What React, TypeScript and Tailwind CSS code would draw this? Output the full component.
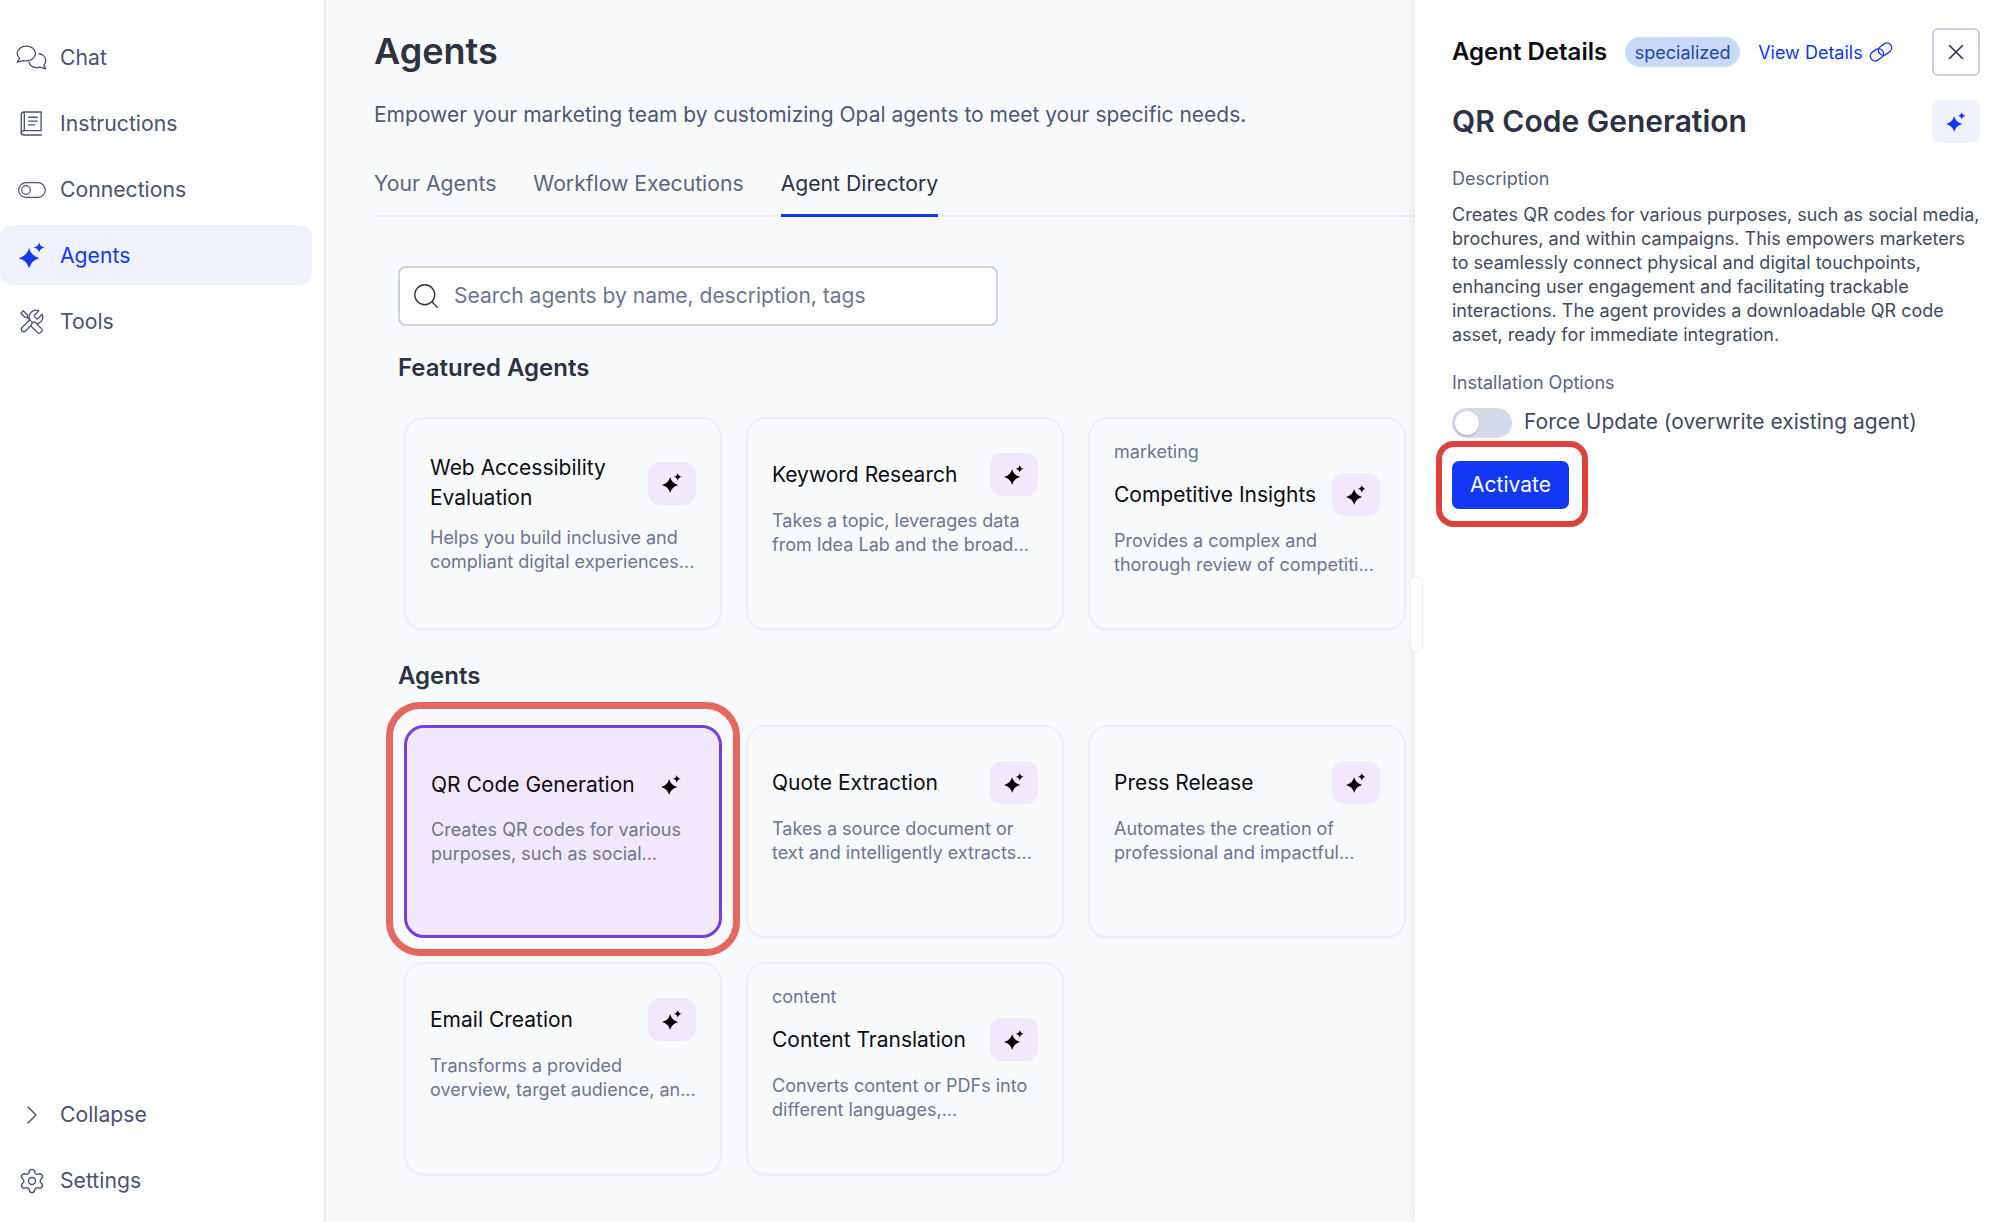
import { ReactNode } from "react";
import { ChevronRight, Search, Settings, X } from "lucide-react";

// Four point star with a smaller one to its upper right
const Sparkle = ({ className }: { className: string }) => (
	<svg viewBox="0 0 24 24" className={className} fill="currentColor">
		<path d="M10 5.500C11 9.900 13.800 12.900 18.800 14.200C13.800 15.500 11 18.500 10 23C9 18.500 6.200 15.500 1.200 14.200C6.200 12.900 9 9.900 10 5.500Z" />
		<path d="M18.300 1C18.800 3.400 20 4.700 22.800 5.300C20 5.900 18.800 7.200 18.300 9.600C17.800 7.200 16.600 5.900 13.800 5.300C16.600 4.700 17.800 3.400 18.300 1Z" />
	</svg>
);

const ChatIcon = () => (
	<svg viewBox="0 0 30 24" className="w-[31px] h-[25px]" fill="none" stroke="currentColor" strokeWidth="1.300" strokeLinejoin="round" strokeLinecap="round">
		<path d="M10 1C5 1 1.200 4 1.200 8C1.200 10 2 11.600 3.400 12.800L1.300 16.500L7.200 15C8 15.200 9 15.300 10 15.300C15 15.300 18.800 12.100 18.800 8C18.800 4 15 1 10 1Z" />
		<path d="M12.500 16.600C13.700 20 16.500 21.800 20 21.800C21 21.800 22 21.600 23 21.300L28.800 23L26.900 19.600C28 18.400 28.800 16.800 28.800 15C28.800 11.700 26.200 9 22.500 8.400" />
	</svg>
);

const BookIcon = () => (
	<svg viewBox="0 0 24 26" className="w-[23px] h-[25px]" fill="none" stroke="currentColor" strokeWidth="1.400" strokeLinejoin="round" strokeLinecap="round">
		<path d="M4.500 1H22V20.500H4C2.500 20.500 1.300 21.500 1.300 22.800C1.300 24.100 2.500 25 4 25H22.500" />
		<path d="M1.300 22.800V4C1.300 2.300 2.700 1 4.500 1V20.500" />
		<path d="M9 6.500H18M9 10.500H18M9 14.500H15" />
	</svg>
);

const ToggleIcon = () => (
	<svg viewBox="0 0 28 16" className="w-[28px] h-[16px]" fill="none" stroke="currentColor" strokeWidth="1.200">
		<rect x="0.700" y="0.700" width="26.600" height="14.600" rx="7.300" />
		<circle cx="8" cy="8" r="4.300" />
	</svg>
);

// Wrench running under a screwdriver
const ToolsIcon = () => (
	<svg viewBox="0 0 24 24" className="w-[27px] h-[27px]" fill="none" stroke="currentColor" strokeWidth="1.150" strokeLinejoin="round" strokeLinecap="round">
		<path d="M14.700 6.300a1 1 0 0 0 0 1.400l1.600 1.600a1 1 0 0 0 1.400 0l3.770-3.770a6 6 0 0 1-7.940 7.940l-6.910 6.910a2.120 2.120 0 0 1-3-3l6.910-6.910a6 6 0 0 1 7.940-7.940l-3.760 3.760z" />
		<path d="M2.500 4.700L4.700 2.500L8.200 6L8.500 8.500L6 8.200Z" />
		<path d="M8.300 8.300L13.200 13.200" />
		<rect x="11" y="15" width="11" height="5" rx="1.500" transform="rotate(45 16.500 17.500)" fill="white" />
	</svg>
);

const LinkIcon = () => (
	<svg viewBox="0 0 26 20" className="w-[26px] h-[20px]" fill="none" stroke="currentColor" strokeWidth="1.400">
		<g transform="rotate(-35 13 10)">
			<rect x="1" y="5.200" width="14" height="9.600" rx="4.800" />
			<rect x="11" y="5.200" width="14" height="9.600" rx="4.800" />
		</g>
	</svg>
);

type NavProps = { icon: ReactNode; label: string; active?: boolean };

const NavItem = ({ icon, label, active }: NavProps) => (
	<div className="h-[66px] flex items-center">
		<div
			className={`w-[312px] h-[60px] rounded-[12px] flex items-center text-[21.200px] pt-[1px] ${
				active ? "bg-[#f0f3fd] text-[#1238f4]" : "text-[#4a5370]"
			}`}
		>
			<div className="w-[60px] pl-[16px] pr-[13px] flex justify-center shrink-0">{icon}</div>
			{label}
		</div>
	</div>
);

type Agent = { title: string; desc: string; category?: string; selected?: boolean };

const featured: Agent[] = [
	{ title: "Web Accessibility\nEvaluation", desc: "Helps you build inclusive and\ncompliant digital experiences..." },
	{ title: "Keyword Research", desc: "Takes a topic, leverages data\nfrom Idea Lab and the broad..." },
	{ title: "Competitive Insights", desc: "Provides a complex and\nthorough review of competiti...", category: "marketing" },
];

const agents: Agent[] = [
	{ title: "QR Code Generation", desc: "Creates QR codes for various\npurposes, such as social...", selected: true },
	{ title: "Quote Extraction", desc: "Takes a source document or\ntext and intelligently extracts..." },
	{ title: "Press Release", desc: "Automates the creation of\nprofessional and impactful..." },
	{ title: "Email Creation", desc: "Transforms a provided\noverview, target audience, an..." },
	{ title: "Content Translation", desc: "Converts content or PDFs into\ndifferent languages,...", category: "content" },
];

const AgentCard = ({ agent }: { agent: Agent }) => (
	<div className="relative h-[213px]">
		<div
			className={`h-full rounded-[20px] px-[24px] ${agent.category ? "pt-[22px]" : agent.selected ? "pt-[35px]" : "pt-[34px]"} ${
				agent.selected
					? "bg-[#f2e8fc] border-[3px] border-[#723fe2]"
					: "bg-[#f9fafc] border-2 border-[#eff0f7] shadow-[0_1px_2px_rgba(40,50,90,0.06)]"
			}`}
		>
			{agent.category && (
				<div className="text-[18px] leading-[22px] text-[#6c7591] mb-[10px]">{agent.category}</div>
			)}
			<div className="flex items-center justify-between">
				<div className="text-[21px] leading-[30px] text-[#0d0d12] whitespace-pre-line">{agent.title}</div>
				<div className={`w-[48px] h-[43px] rounded-[12px] shrink-0 flex items-center justify-center text-black ${agent.selected ? "" : "bg-[#f2e8fc]"}`}>
					<Sparkle className="w-[22px] h-[22px]" />
				</div>
			</div>
			<div className={`${agent.selected ? "mt-[12px]" : "mt-[13px]"} text-[18px] leading-[24px] text-[#6c7591] whitespace-pre-line`}>{agent.desc}</div>
		</div>
		{agent.selected && (
			<div className="absolute -left-[18px] -right-[18px] -top-[23px] -bottom-[18px] rounded-[34px] border-[7px] border-[#e6675d]" />
		)}
	</div>
);

export default function App() {
	return (
		<div className="w-[2010px] h-[1222px] flex overflow-hidden bg-white font-['Inter',sans-serif]">
			<aside className="w-[326px] shrink-0 border-r-2 border-[#eceef5] flex flex-col justify-between pt-[24px] pb-[9px]">
				<nav>
					<NavItem icon={<ChatIcon />} label="Chat" />
					<NavItem icon={<BookIcon />} label="Instructions" />
					<NavItem icon={<ToggleIcon />} label="Connections" />
					<NavItem icon={<Sparkle className="w-[29px] h-[29px] shrink-0" />} label="Agents" active />
					<NavItem icon={<ToolsIcon />} label="Tools" />
				</nav>
				<div>
					<NavItem icon={<ChevronRight className="w-[32px] h-[32px] shrink-0" strokeWidth={1.100} />} label="Collapse" />
					<NavItem icon={<Settings className="w-[28px] h-[28px] shrink-0" strokeWidth={1.200} />} label="Settings" />
				</div>
			</aside>

			<main className="w-[1089px] shrink-0 bg-[#f9fafc] pl-[48px] pt-[29px]">
				<h1 className="text-[36px] leading-[44px] font-semibold text-[#2c3242]">Agents</h1>
				<p className="mt-[30px] text-[21px] leading-[24px] text-[#4f5873]">
					Empower your marketing team by customizing Opal agents to meet your specific needs.
				</p>
				<div className="mt-[24px] h-[66px] border-b-2 border-[#eceef5] flex gap-[37px] text-[21.200px]">
					<div className="h-[66px] flex items-center text-[#5b6581]">Your Agents</div>
					<div className="h-[66px] flex items-center text-[#5b6581]">Workflow Executions</div>
					<div className="h-[66px] flex items-center text-[#2c3242] border-b-[3px] border-[#1238f4] pt-[3px]">Agent Directory</div>
				</div>

				<div className="ml-[24px]">
					<div className="mt-[49px] w-[600px] h-[60px] bg-white border-2 border-[#cdd2e0] rounded-[8px] flex items-center pl-[11px] gap-[13px]">
						<Search className="w-[30px] h-[30px] text-[#2c3242]" strokeWidth={1.050} />
						<span className="text-[21px] text-[#6c7591]">Search agents by name, description, tags</span>
					</div>

					<h2 className="mt-[27px] text-[24px] leading-[30px] font-semibold text-[#2c3242]">Featured Agents</h2>
					<div className="mt-[34px] ml-[6px] grid grid-cols-[repeat(3,318px)] gap-[24px]">
						{featured.map((a) => (
							<AgentCard key={a.title} agent={a} />
						))}
					</div>

					<h2 className="mt-[31px] text-[24px] leading-[30px] font-semibold text-[#2c3242]">Agents</h2>
					<div className="mt-[34px] ml-[6px] grid grid-cols-[repeat(3,318px)] gap-[24px]">
						{agents.map((a) => (
							<AgentCard key={a.title} agent={a} />
						))}
					</div>
				</div>
			</main>

			<section className="relative w-[595px] shrink-0 bg-white pl-[37px] pr-[30px] pt-[28px] shadow-[-3px_0_8px_rgba(40,50,90,0.08)]">
				<div className="absolute -left-[5px] top-[576px] w-[13px] h-[76px] bg-white border border-[#eceef5] rounded-[6px]" />
				<div className="flex items-center h-[48px]">
					<span className="text-[24px] font-semibold text-[#0d0d12]">Agent Details</span>
					<span className="ml-[18px] w-[115px] h-[30px] rounded-full bg-[#c9d9f7] text-[#1d4a9e] text-[18px] flex items-center justify-center">specialized</span>
					<span className="ml-[18px] text-[18px] text-[#1238f4]">View Details</span>
					<span className="ml-[5px] text-[#1238f4]"><LinkIcon /></span>
					<div className="ml-auto w-[48px] h-[48px] border-2 border-[#c8cfde] rounded-[6px] flex items-center justify-center text-[#2c3242]">
						<X className="w-[26px] h-[26px]" strokeWidth={1.400} />
					</div>
				</div>
				<div className="mt-[24px] flex items-center justify-between h-[43px]">
					<h2 className="text-[30px] font-semibold text-[#2c3242]">QR Code Generation</h2>
					<div className="w-[48px] h-[43px] rounded-[8px] bg-[#f0f3fd] flex items-center justify-center text-[#1238f4]">
						<Sparkle className="w-[22px] h-[22px]" />
					</div>
				</div>
				<div className="mt-[24px] text-[18px] leading-[24px] text-[#5b6581]">Description</div>
				<p className="mt-[12px] w-[530px] text-[18px] leading-[24px] text-[#424a5e]">
					Creates QR codes for various purposes, such as social media, brochures, and within campaigns. This empowers marketers to seamlessly connect physical and digital touchpoints, enhancing user engagement and facilitating trackable interactions. The agent provides a downloadable QR code asset, ready for immediate integration.
				</p>
				<div className="mt-[24px] text-[18px] leading-[24px] text-[#5b6581]">Installation Options</div>
				<div className="mt-[12px] flex items-center gap-[12px]">
					<div className="w-[60px] h-[30px] rounded-full bg-[#d5dae8] flex items-center pl-[3px]">
						<div className="w-[24px] h-[24px] rounded-full bg-white shadow-[0_1px_2px_rgba(0,0,0,0.25)]" />
					</div>
					<span className="text-[21px] leading-[30px] pb-[2px] text-[#424a5e]">Force Update (overwrite existing agent)</span>
				</div>
				<div className="relative mt-[22px] w-[117px] h-[48px]">
					<div className="w-full h-full rounded-[7px] bg-[#1238f4] text-white text-[21px] flex items-center justify-center">Activate</div>
					<div className="absolute -left-[16px] -right-[19px] -top-[20px] -bottom-[18px] rounded-[18px] border-[6px] border-[#dd423a]" />
				</div>
			</section>
		</div>
	);
}
